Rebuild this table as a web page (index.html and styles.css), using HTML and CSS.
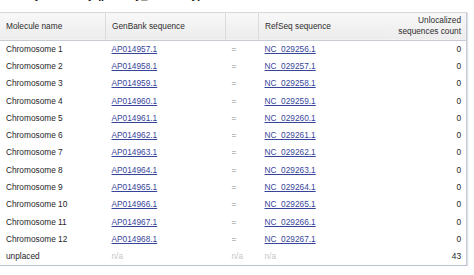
FILE: index.html
```html
<!DOCTYPE html>
<html>
<head>
<meta charset="utf-8">
<link rel="stylesheet" href="styles.css">
</head>
<body>
<div class="page">
  <h2 class="title">Primary assembly (primary_assembly)</h2>
  <table class="mol">
    <thead>
      <tr>
        <th class="c-name">Molecule name</th>
        <th class="c-gb">GenBank sequence</th>
        <th class="c-eq"></th>
        <th class="c-rs">RefSeq sequence</th>
        <th class="c-cnt">Unlocalized<br>sequences count</th>
      </tr>
    </thead>
    <tbody>
      <tr><td>Chromosome 1</td><td><a href="#">AP014957.1</a></td><td class="eq">=</td><td><a href="#">NC_029256.1</a></td><td class="num">0</td></tr>
      <tr><td>Chromosome 2</td><td><a href="#">AP014958.1</a></td><td class="eq">=</td><td><a href="#">NC_029257.1</a></td><td class="num">0</td></tr>
      <tr><td>Chromosome 3</td><td><a href="#">AP014959.1</a></td><td class="eq">=</td><td><a href="#">NC_029258.1</a></td><td class="num">0</td></tr>
      <tr><td>Chromosome 4</td><td><a href="#">AP014960.1</a></td><td class="eq">=</td><td><a href="#">NC_029259.1</a></td><td class="num">0</td></tr>
      <tr><td>Chromosome 5</td><td><a href="#">AP014961.1</a></td><td class="eq">=</td><td><a href="#">NC_029260.1</a></td><td class="num">0</td></tr>
      <tr><td>Chromosome 6</td><td><a href="#">AP014962.1</a></td><td class="eq">=</td><td><a href="#">NC_029261.1</a></td><td class="num">0</td></tr>
      <tr><td>Chromosome 7</td><td><a href="#">AP014963.1</a></td><td class="eq">=</td><td><a href="#">NC_029262.1</a></td><td class="num">0</td></tr>
      <tr><td>Chromosome 8</td><td><a href="#">AP014964.1</a></td><td class="eq">=</td><td><a href="#">NC_029263.1</a></td><td class="num">0</td></tr>
      <tr><td>Chromosome 9</td><td><a href="#">AP014965.1</a></td><td class="eq">=</td><td><a href="#">NC_029264.1</a></td><td class="num">0</td></tr>
      <tr><td>Chromosome 10</td><td><a href="#">AP014966.1</a></td><td class="eq">=</td><td><a href="#">NC_029265.1</a></td><td class="num">0</td></tr>
      <tr><td>Chromosome 11</td><td><a href="#">AP014967.1</a></td><td class="eq">=</td><td><a href="#">NC_029266.1</a></td><td class="num">0</td></tr>
      <tr><td>Chromosome 12</td><td><a href="#">AP014968.1</a></td><td class="eq">=</td><td><a href="#">NC_029267.1</a></td><td class="num">0</td></tr>
      <tr><td>unplaced</td><td class="na">n/a</td><td class="na">n/a</td><td class="na">n/a</td><td class="num">43</td></tr>
    </tbody>
  </table>
</div>
</body>
</html>
```

FILE: styles.css
```css
html, body {
  margin: 0;
  padding: 0;
  background: #ffffff;
}

.page {
  display: flow-root;
  font-family: "Liberation Sans", Arial, sans-serif;
  font-size: 8.3px;
  color: #262626;
}

.title {
  margin: -11px 0 10.5px 0;
  font-size: 11px;
  line-height: 12px;
  font-weight: bold;
  color: #222222;
  white-space: nowrap;
}

.mol {
  width: 467px;
  border-collapse: collapse;
  table-layout: fixed;
  border-top: 1px solid #d6d9de;
  border-right: 1px solid #c6ccd6;
  border-bottom: 1px solid #b9c1cf;
  box-shadow: 1px 1px 1px rgba(160, 170, 190, 0.35);
}

.mol th {
  height: 27px;
  padding: 0 5px 0 6px;
  font-weight: normal;
  text-align: left;
  line-height: 11px;
  color: #2e2e2e;
  background: linear-gradient(#f8f8f8, #ececec);
  border-right: 1px solid #dcdcdc;
  border-bottom: 1px solid #c8ccd2;
  vertical-align: middle;
  white-space: nowrap;
}

.mol th.c-rs,
.mol th.c-cnt {
  border-right: none;
}

.c-name { width: 94px; }
.c-gb { width: 108px; }
.c-eq { width: 21px; }
.c-cnt { width: 70px; }

.mol th.c-cnt {
  text-align: right;
}

.mol td {
  height: 17.3px;
  padding: 0 5px 0 6px;
  line-height: 11px;
  vertical-align: middle;
  white-space: nowrap;
}

.mol a {
  color: #36449a;
  text-decoration: underline;
}

.mol td.eq {
  color: #888888;
}

.mol td.na {
  color: #c8c8c8;
}

.mol td.num {
  text-align: right;
}
```
